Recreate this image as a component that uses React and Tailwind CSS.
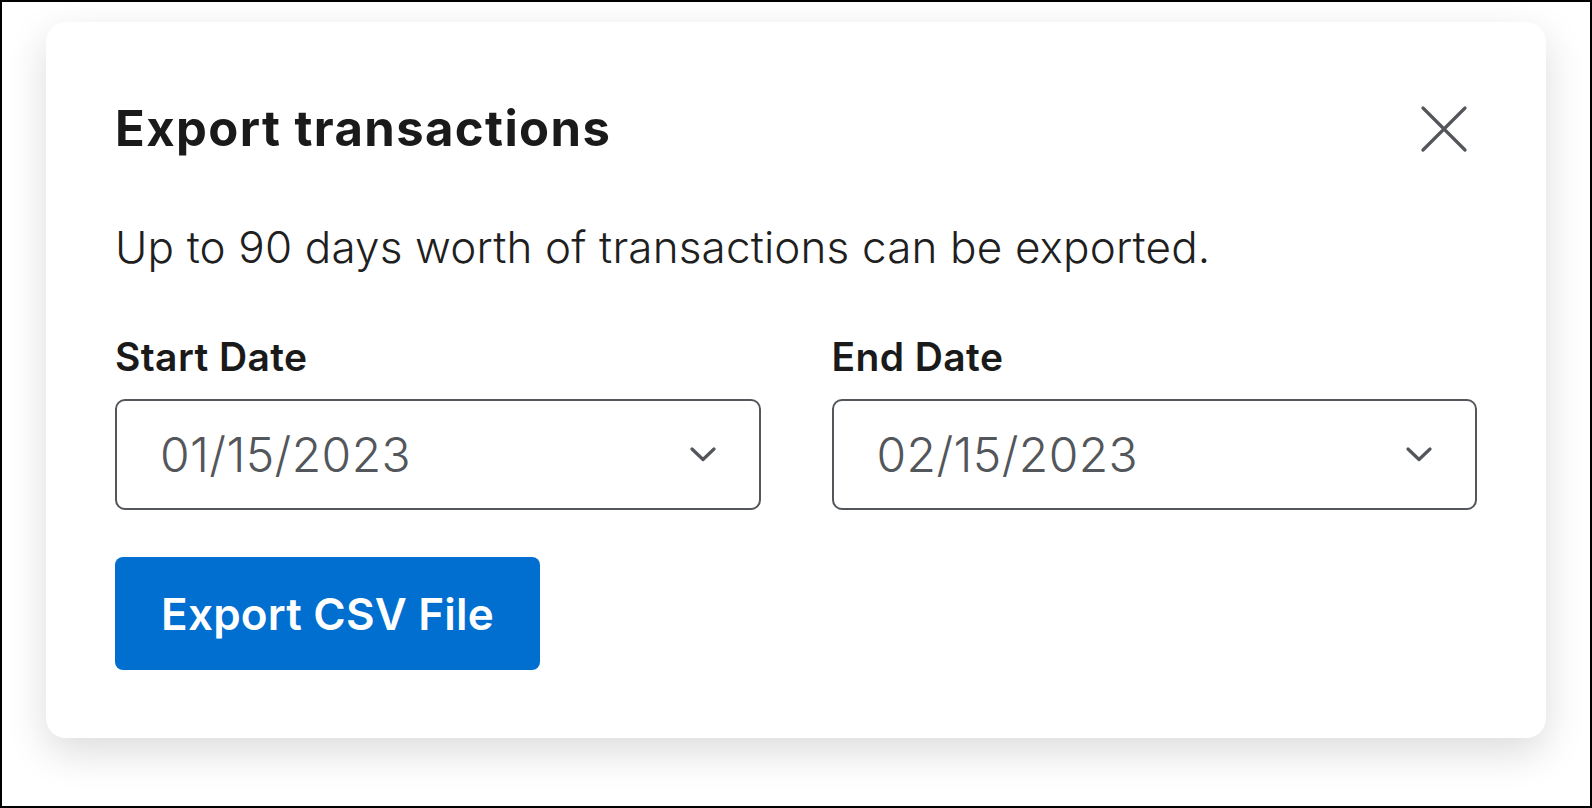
import { useState } from 'react';

function CloseIcon() {
    return (
        <svg width="46" height="46" viewBox="0 0 46 46" fill="none">
            <path d="M2 2 L44 44 M44 2 L2 44" stroke="#53565a" strokeWidth="3.2" strokeLinecap="round" />
        </svg>
    );
}

function Chevron() {
    return (
        <svg width="26" height="15" viewBox="0 0 26 15" fill="none">
            <path d="M2 2 L13 12.5 L24 2" stroke="#53565a" strokeWidth="3.2" strokeLinecap="round" strokeLinejoin="round" />
        </svg>
    );
}

function DateField({ label, value }) {
    return (
        <div className="flex flex-col">
            <label className="h-[50px] flex items-center text-[39px] font-semibold text-[#1a1a1a] tracking-[0.4px]">
                {label}
            </label>
            <button className="mt-[17px] h-[111px] w-full border-2 border-[#53565a] rounded-[10px] flex items-center justify-between pl-[43px] pr-[43px] bg-white">
                <span className="text-[48px] font-light text-[#53565a] tracking-[0.4px]">{value}</span>
                <Chevron />
            </button>
        </div>
    );
}

export default function App() {
    const [start] = useState('01/15/2023');
    const [end] = useState('02/15/2023');

    return (
        <div
            className="w-[1592px] h-[808px] box-border border-2 border-black bg-white pl-[44px] pt-[20px] overflow-hidden"
            style={{ fontFamily: 'Inter, "Liberation Sans", sans-serif' }}
        >
            <div className="w-[1500px] bg-white rounded-[20px] shadow-[0_14px_40px_rgba(0,0,0,0.14)] px-[69px] pt-[67px] pb-[68px]">
                {/* Header */}
                <div className="h-[80px] flex items-center justify-between">
                    <h1 className="text-[49px] font-bold text-[#1a1a1a] tracking-[1.4px]">Export transactions</h1>
                    <button className="w-[66px] h-[66px] flex items-center justify-center">
                        <CloseIcon />
                    </button>
                </div>

                <p className="mt-[48px] h-[60px] flex items-center text-[44px] font-light text-[#1f1f1f] tracking-[0.15px]">
                    Up to 90 days worth of transactions can be exported.
                </p>

                <div className="mt-[55px] grid grid-cols-2 gap-[71px]">
                    <DateField label="Start Date" value={start} />
                    <DateField label="End Date" value={end} />
                </div>

                <button className="mt-[47px] w-[425px] h-[113px] bg-[#006fcf] rounded-[8px] text-white text-[44px] font-semibold tracking-[0.2px] flex items-center justify-center">
                    Export CSV File
                </button>
            </div>
        </div>
    );
}
